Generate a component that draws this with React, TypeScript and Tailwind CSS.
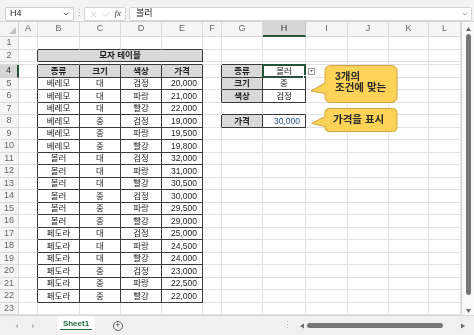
import React from "react";
import { ChevronDown, X, Check } from "lucide-react";

const cols = ["A", "B", "C", "D", "E", "F", "G", "H", "I", "J", "K", "L"];

const hats: [string, string, string, string][] = [
  ["베레모", "대", "검정", "20,000"],
  ["베레모", "대", "파랑", "21,000"],
  ["베레모", "대", "빨강", "22,000"],
  ["베레모", "중", "검정", "19,000"],
  ["베레모", "중", "파랑", "19,500"],
  ["베레모", "중", "빨강", "19,800"],
  ["볼러", "대", "검정", "32,000"],
  ["볼러", "대", "파랑", "31,000"],
  ["볼러", "대", "빨강", "30,500"],
  ["볼러", "중", "검정", "30,000"],
  ["볼러", "중", "파랑", "29,500"],
  ["볼러", "중", "빨강", "29,000"],
  ["페도라", "대", "검정", "25,000"],
  ["페도라", "대", "파랑", "24,500"],
  ["페도라", "대", "빨강", "24,000"],
  ["페도라", "중", "검정", "23,000"],
  ["페도라", "중", "파랑", "22,500"],
  ["페도라", "중", "빨강", "22,000"],
];

const lookup: Record<number, [string, string]> = {
  4: ["종류", "볼러"],
  5: ["크기", "중"],
  6: ["색상", "검정"],
};

// cells that carry a thin black border in the sheet
function boxed(r: number, c: number) {
  if (r === 2 && c >= 1 && c <= 4) return true;
  if (r >= 4 && r <= 22 && c >= 1 && c <= 4) return true;
  if (r >= 4 && r <= 6 && (c === 6 || c === 7)) return true;
  if (r === 8 && (c === 6 || c === 7)) return true;
  return false;
}

type CellInfo = {
  text?: string;
  head?: boolean;
  align?: "center" | "right";
  blue?: boolean;
};

function getCell(r: number, c: number): CellInfo {
  if (r === 2 && c === 1) return { text: "모자 테이블", head: true };
  if (r === 4 && c >= 1 && c <= 4)
    return { text: ["종류", "크기", "색상", "가격"][c - 1], head: true };
  if (r >= 5 && r <= 22 && c >= 1 && c <= 4) {
    const row = hats[r - 5];
    return { text: row[c - 1], align: c === 4 ? "right" : "center" };
  }
  if (lookup[r] && c === 6) return { text: lookup[r][0], head: true };
  if (lookup[r] && c === 7) return { text: lookup[r][1] };
  if (r === 8 && c === 6) return { text: "가격", head: true };
  if (r === 8 && c === 7) return { text: "30,000", align: "right", blue: true };
  return {};
}

function Sheet() {
  const cells: React.ReactNode[] = [];

  cells.push(
    <div key="corner" className="relative bg-[#f5f5f5] border-r border-b border-[#d4d4d4]">
      <svg className="absolute right-[2px] bottom-[2px]" width="7" height="7">
        <path d="M7 0 V7 H0 Z" fill="#c2c2c2" />
      </svg>
    </div>
  );
  cols.forEach((l, i) =>
    cells.push(
      <div
        key={l}
        className={
          i === 7
            ? "flex items-center justify-center bg-[#d6d6d6] border-r border-r-[#c4c4c4] border-b-2 border-b-[#23543a] text-[#333] text-[9px]"
            : "flex items-center justify-center bg-[#f5f5f5] border-r border-b border-[#d9d9d9] text-[#666] text-[9px]"
        }
      >
        {l}
      </div>
    )
  );

  for (let r = 1; r <= 23; r++) {
    const next = r + 1;
    cells.push(
      <div
        key={"h" + r}
        className={
          r === 4
            ? "flex items-center justify-center bg-[#d6d6d6] border-r-2 border-r-[#23543a] border-b border-b-[#d0d0d0] text-[#333] text-[9px]"
            : "flex items-center justify-center bg-[#f5f5f5] border-r border-b border-[#d9d9d9] text-[#666] text-[9px]"
        }
      >
        {r === 3 ? "" : r}
      </div>
    );
    for (let c = 0; c < 12; c++) {
      if (r === 2 && c >= 2 && c <= 4) continue;
      const span = r === 2 && c === 1 ? 4 : 1;
      const rd = boxed(r, c) || boxed(r, c + span);
      const bd = boxed(r, c) || boxed(next, c);
      const info = getCell(r, c);
      const cls = [
        "relative flex items-center overflow-visible whitespace-nowrap border-r border-b text-[8.5px] leading-none",
        rd ? "border-r-[#3a3a3a]" : "border-r-[#e2e2e2]",
        bd ? "border-b-[#3a3a3a]" : "border-b-[#e2e2e2]",
        info.head ? "bg-[#d9d9d9] font-bold" : "bg-white",
        info.align === "right" ? "justify-end pr-[5px]" : "justify-center",
        info.blue ? "text-[#1f4f8f]" : "text-[#1e1e1e]",
        span === 4 ? "col-span-4" : "",
      ].join(" ");
      cells.push(
        <div key={r + "-" + c} className={cls}>
          {info.text}
          {r === 4 && c === 7 && (
            <div className="absolute -left-px -top-px -right-[0.5px] -bottom-px border-2 border-[#23543a]">
              <div className="absolute -right-[3px] -bottom-[3px] w-[4px] h-[4px] bg-[#23543a] border border-white" />
            </div>
          )}
          {r === 4 && c === 8 && (
            <div className="absolute left-[2px] top-[2.5px] w-[7px] h-[7px] bg-white border border-[#9a9a9a] flex items-center justify-center">
              <svg width="3" height="2">
                <path d="M0 0 H3 L1.5 2 Z" fill="#555" />
              </svg>
            </div>
          )}
        </div>
      );
    }
  }

  return (
    <div className="grid grid-cols-[19px_19px_42px_41px_41px_41px_19px_41px_43px_42px_41px_40px_32px] grid-rows-[15px_12.5px_12.5px_3px_repeat(20,12.5px)]">
      {cells}
    </div>
  );
}

function VScroll() {
  return (
    <div className="w-[13px] h-[293px] bg-[#f9f9f9] border-l border-[#d4d4d4] flex flex-col items-center pt-[5px]">
      <svg width="5" height="4">
        <path d="M2.5 0 L5 4 H0 Z" fill="#6a6a6a" />
      </svg>
      <div className="mt-[3px] w-[5px] h-[261px] rounded-full bg-[#777]" />
      <div className="flex-1" />
      <svg width="5" height="4" className="mb-[2px]">
        <path d="M0 0 H5 L2.5 4 Z" fill="#6a6a6a" />
      </svg>
    </div>
  );
}

function FormulaBar() {
  return (
    <div className="h-[22px] flex items-start pt-[7px] border-b border-[#d4d4d4] bg-[#f3f3f3]">
      <div className="ml-[5px] w-[69px] h-[14px] bg-white border border-[#cfcfcf] rounded-[2px] flex items-center justify-between pl-[4px] pr-[3px] text-[9px] text-[#222]">
        <span>H4</span>
        <ChevronDown size={8} strokeWidth={2.5} color="#555" />
      </div>
      <div className="w-[10px] h-[14px] flex items-center justify-center text-[#aaa] text-[9px]">⋮</div>
      <div className="w-[42px] h-[14px] bg-white border border-[#d6d6d6] rounded-[2px] flex items-center justify-around px-[2px]">
        <X size={9} color="#b8b8b8" strokeWidth={1.5} />
        <Check size={9} color="#b8b8b8" strokeWidth={1.5} />
        <span className="font-['Liberation_Serif',serif] italic text-[9px] text-[#333]">fx</span>
      </div>
      <div className="ml-[3px] w-[343px] h-[14px] bg-white border border-[#d6d6d6] rounded-[2px] flex items-center justify-between pl-[6px] pr-[2px] text-[9px] text-[#222]">
        <span>볼러</span>
        <ChevronDown size={8} strokeWidth={2} color="#777" />
      </div>
    </div>
  );
}

function TabBar() {
  return (
    <div className="h-[20px] flex items-center bg-[#f0f0f0] border-t border-[#d6d6d6]">
      <svg width="6" height="6" className="ml-[14px]">
        <path d="M4 1 L1.5 3 L4 5 Z" fill="#b4b4b4" />
      </svg>
      <svg width="6" height="6" className="ml-[10px]">
        <path d="M2 1 L4.5 3 L2 5 Z" fill="#b4b4b4" />
      </svg>
      <div className="ml-[21px] self-start w-[38px] h-[15px] bg-white flex items-center justify-center relative">
        <span className="text-[8px] font-semibold text-[#1f6b42]">Sheet1</span>
        <div className="absolute left-[3px] right-[3px] bottom-[1px] h-[1.5px] bg-[#1f6b42]" />
      </div>
      <div className="ml-[18px] w-[10px] h-[10px] rounded-full border border-[#666] flex items-center justify-center text-[9px] leading-none text-[#444]">
        +
      </div>
      <div className="ml-[160px] text-[9px] text-[#b8b8b8] leading-none">⋮</div>
      <svg width="6" height="6" className="ml-[7px]">
        <path d="M5 0.5 L1 3 L5 5.5 Z" fill="#6a6a6a" />
      </svg>
      <div className="ml-[2px] w-[136px] h-[5px] rounded-full bg-[#777]" />
      <svg width="6" height="6" className="ml-[17px]">
        <path d="M1 0.5 L5 3 L1 5.5 Z" fill="#6a6a6a" />
      </svg>
    </div>
  );
}

function Callouts() {
  return (
    <>
      <div className="absolute left-[308px] top-[63px] w-[92px] h-[42px]">
        <svg width="92" height="42" className="absolute inset-0">
          <path
            d="M23 2.5 H83 Q89 2.5 89 8.5 V33.5 Q89 39.5 83 39.5 H23 Q17 39.5 17 33.5 V30.5 L3 28 L17 20 V8.5 Q17 2.5 23 2.5 Z"
            fill="#fcd257"
            stroke="#d9a33d"
            strokeWidth="1"
          />
        </svg>
        <div className="absolute left-[27px] top-[8px] text-[10.5px] leading-[11px] font-bold text-[#2a2a2a] whitespace-nowrap">
          3개의
          <br />
          조건에 맞는
        </div>
      </div>
      <div className="absolute left-[308px] top-[106px] w-[92px] h-[28px]">
        <svg width="92" height="28" className="absolute inset-0">
          <path
            d="M21 2.5 H85 Q89 2.5 89 6.5 V21.5 Q89 25.5 85 25.5 H21 Q17 25.5 17 21.5 V20.5 L3.5 17.5 L17 10.5 V6.5 Q17 2.5 21 2.5 Z"
            fill="#fcd257"
            stroke="#d9a33d"
            strokeWidth="1"
          />
        </svg>
        <div className="absolute left-[25px] top-[8px] text-[10.5px] leading-[11px] font-bold text-[#2a2a2a] whitespace-nowrap">
          가격을 표시
        </div>
      </div>
    </>
  );
}

export default function App() {
  return (
    <div className="relative w-[474px] h-[335px] overflow-hidden bg-[#f3f3f3] will-change-transform font-['Liberation_Sans','Noto_Sans_CJK_KR',sans-serif]">
      <FormulaBar />
      <div className="flex">
        <Sheet />
        <VScroll />
      </div>
      <TabBar />
      <Callouts />
    </div>
  );
}
